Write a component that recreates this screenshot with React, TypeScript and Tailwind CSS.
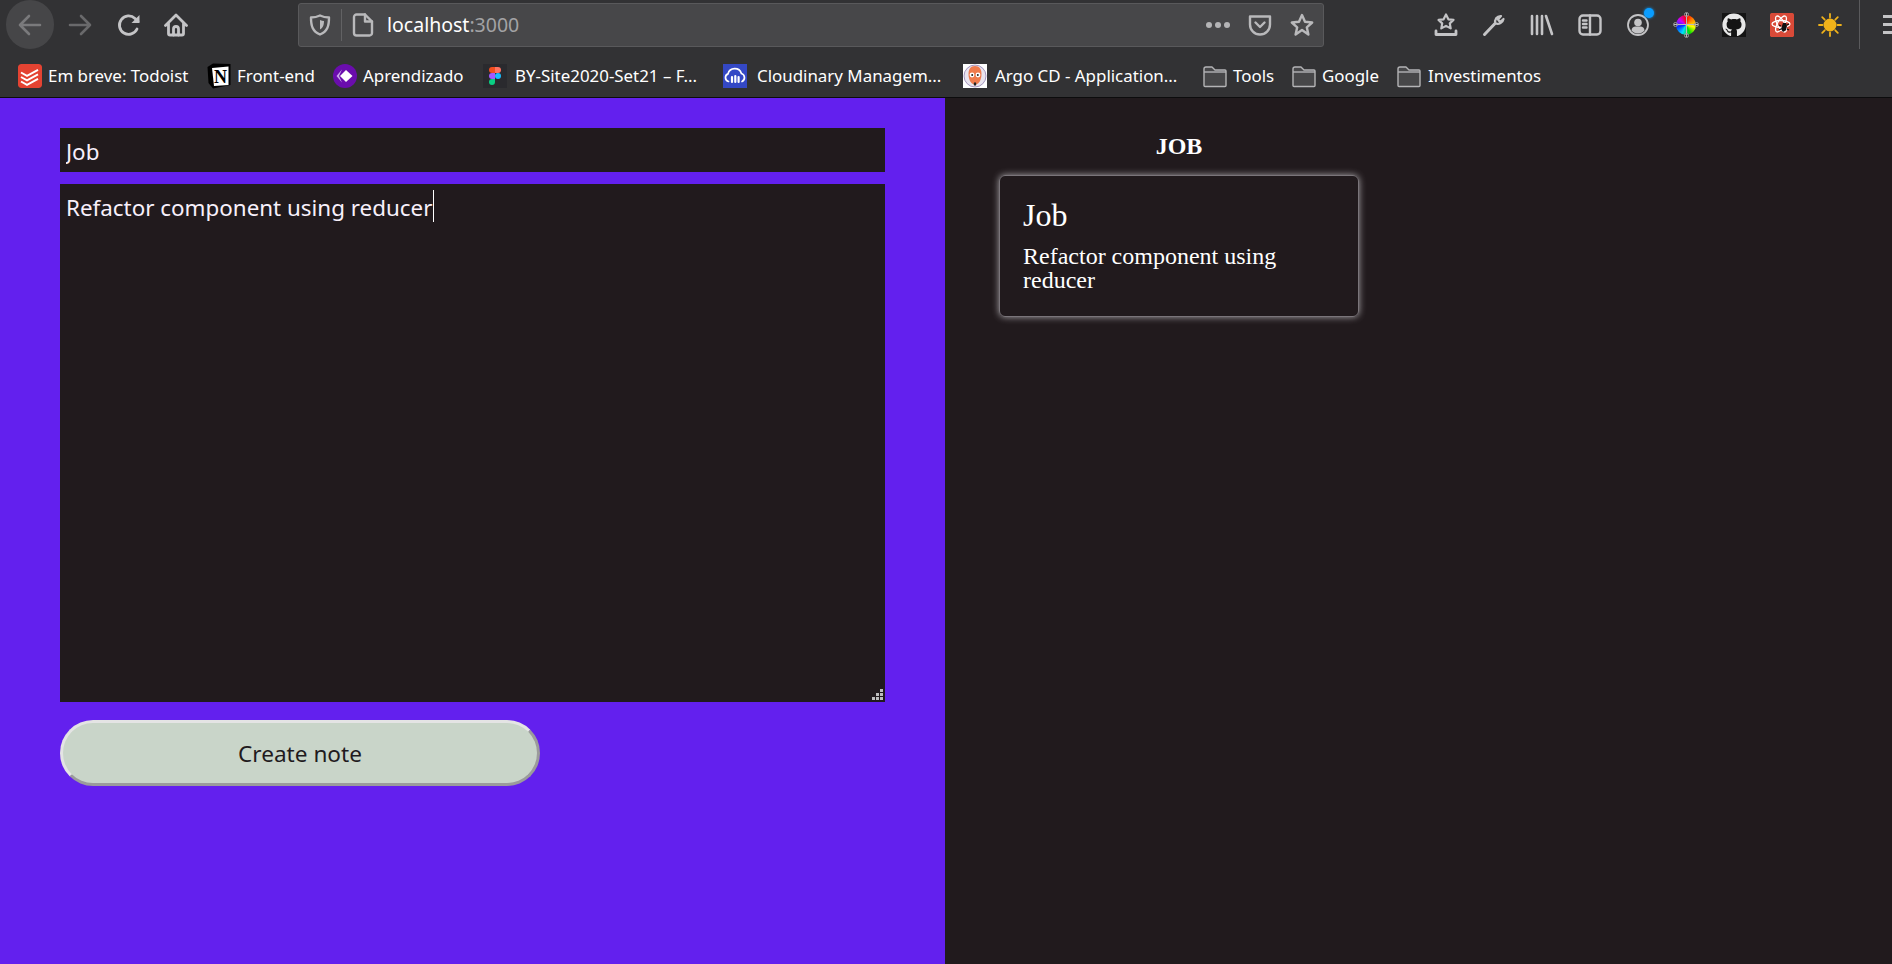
import { FaGithub } from "react-icons/fa";

const uiFont = "font-['Noto_Sans',sans-serif]";

function Glyph({ children, className = "text-[#bdbdbf]", w = 2.4 }: { children: React.ReactNode; className?: string; w?: number }) {
  return (
    <svg width="24" height="24" viewBox="0 0 24 24" fill="none" stroke="currentColor" strokeWidth={w} strokeLinecap="round" strokeLinejoin="round" className={className}>
      {children}
    </svg>
  );
}

function Btn({ children }: { children: React.ReactNode }) {
  return <div className="flex h-12 w-12 shrink-0 items-center justify-center">{children}</div>;
}

function Folder() {
  return (
    <svg width="24" height="24" viewBox="0 0 24 24" fill="#474749" stroke="#b4b4b6" strokeWidth="1.4" strokeLinejoin="round">
      <path d="M1 21.5V5a2 2 0 0 1 2-2h6l3 3h10a1 1 0 0 1 1 1v14.5a1 1 0 0 1-1 1H2a1 1 0 0 1-1-1z" />
      <path d="M1 8h22" />
    </svg>
  );
}

function Todoist() {
  return (
    <svg width="24" height="24" viewBox="0 0 24 24" className="rounded-[3px]">
      <rect width="24" height="24" rx="3" fill="#e44332" />
      <path d="M3 8.5l6 3.4 11-6M3 13l6 3.4 11-6M3 17.5l6 3.4 11-6" fill="none" stroke="#fff" strokeWidth="1.9" />
    </svg>
  );
}

function Notion() {
  return (
    <svg width="24" height="26" viewBox="0 0 24 26">
      <path d="M0.500 4L6 0.500 23.500 1v21L6 25.500 1.500 20z" fill="#000" />
      <path d="M5 5l16.500-1.500V22L7 23z" fill="#fff" />
      <text x="13.500" y="20" textAnchor="middle" fontFamily="'Liberation Serif', serif" fontSize="18" fontWeight="700" fill="#000">
        N
      </text>
    </svg>
  );
}

function Aprendizado() {
  return (
    <svg width="24" height="24" viewBox="0 0 24 24">
      <circle cx="12" cy="12" r="12" fill="#6a0dad" />
      <path d="M9 5.500L3.500 12 9 18.500 6 12z" fill="#c9a6ea" />
      <path d="M13 6l6.500 6-6.500 6-6-6z" fill="#fff" />
    </svg>
  );
}

function Figma() {
  return (
    <svg width="24" height="24" viewBox="0 0 24 24">
      <rect width="24" height="24" fill="#2a2a2e" />
      <path d="M12 3H9a3 3 0 0 0 0 6h3z" fill="#f24e1e" />
      <path d="M12 3h3a3 3 0 0 1 0 6h-3z" fill="#ff7262" />
      <path d="M12 9H9a3 3 0 0 0 0 6h3z" fill="#a259ff" />
      <circle cx="15" cy="12" r="3" fill="#1abcfe" />
      <path d="M9 15h3v3a3 3 0 1 1-3-3z" fill="#0acf83" />
    </svg>
  );
}

function Cloudinary() {
  return (
    <svg width="24" height="24" viewBox="0 0 24 24">
      <rect width="24" height="24" fill="#3448c5" />
      <path d="M5.500 17.500a4 4 0 0 1-.5-7.600 7 7 0 0 1 13.400-.4 4.300 4.300 0 0 1 .6 8" fill="none" stroke="#fff" strokeWidth="1.7" strokeLinecap="round" />
      <path d="M9 13v5M12.300 12v6M15.600 13v5" stroke="#fff" strokeWidth="2.200" strokeLinecap="round" />
    </svg>
  );
}

function Argo() {
  return (
    <svg width="24" height="24" viewBox="0 0 24 24">
      <rect width="24" height="24" fill="#fff" />
      <circle cx="12" cy="12" r="11" fill="#e9e4ef" stroke="#8f7fb0" strokeWidth="0.8" />
      <path d="M12 2c4.500 0 6.500 3.500 6.500 8 0 4-1.500 8-3.500 9.500-1.800 1.200-4.200 1.200-6 0C7 18 5.500 14 5.500 10c0-4.500 2-8 6.500-8z" fill="#ef7b4d" />
      <circle cx="9" cy="11" r="2.400" fill="#fff" />
      <circle cx="15" cy="11" r="2.400" fill="#fff" />
      <circle cx="9.200" cy="11" r="1" fill="#222" />
      <circle cx="14.800" cy="11" r="1" fill="#222" />
      <ellipse cx="12" cy="20" rx="1.300" ry="1.800" fill="#222" />
    </svg>
  );
}

const bookmarks = [
  { icon: <Todoist />, label: "Em breve: Todoist", left: 18, text: 48 },
  { icon: <Notion />, label: "Front-end", left: 207, text: 237 },
  { icon: <Aprendizado />, label: "Aprendizado", left: 333, text: 363 },
  { icon: <Figma />, label: "BY-Site2020-Set21 – F...", left: 483, text: 515 },
  { icon: <Cloudinary />, label: "Cloudinary Managem...", left: 723, text: 757 },
  { icon: <Argo />, label: "Argo CD - Application...", left: 963, text: 995 },
  { icon: <Folder />, label: "Tools", left: 1203, text: 1233 },
  { icon: <Folder />, label: "Google", left: 1292, text: 1322 },
  { icon: <Folder />, label: "Investimentos", left: 1397, text: 1428 },
];

function Toolbar() {
  return (
    <div className="flex h-[49px] items-center bg-[#323234] pl-[6px]">
      <div className="flex h-[49px] w-12 shrink-0 items-center justify-center rounded-full bg-[#464648]">
        <Glyph className="text-[#7a7a7c]" w={2.6}>
          <path d="M22 12H2M11 3l-9 9 9 9" />
        </Glyph>
      </div>
      <div className="ml-[2px]">
        <Btn>
          <Glyph className="text-[#69696b]" w={2.6}>
            <path d="M2 12h20M13 3l9 9-9 9" />
          </Glyph>
        </Btn>
      </div>
      <div className="ml-[1px]">
        <Btn>
          <Glyph className="text-[#c4c4c6]" w={2.8}>
            <path d="M20 16a9.200 9.200 0 1 1-2-10.500l3 2.800" />
            <path d="M22.500 2v8h-8" fill="currentColor" stroke="none" />
          </Glyph>
        </Btn>
      </div>
      <div className="-ml-[1px]">
        <Btn>
          <Glyph className="text-[#c4c4c6]" w={2.8}>
            <path d="M1.500 12.500L12 2l10.500 10.500M4.500 10v10.500a1.500 1.500 0 0 0 1.500 1.500h12a1.500 1.500 0 0 0 1.500-1.500V10" />
            <path d="M9.500 22v-6a2.500 2.500 0 0 1 5 0v6" />
          </Glyph>
        </Btn>
      </div>

      <div className={`ml-[98px] flex h-[44px] w-[1026px] shrink-0 items-center rounded-[3px] border border-[#59595b] bg-[#474749] ${uiFont}`}>
        <div className="flex w-[42px] justify-center">
          <Glyph className="text-[#b9b9bb]" w={2.4}>
            <path d="M12 2.500c3 1.500 6 2 9 2 0 8.500-1.500 14-9 17-7.500-3-9-8.500-9-17 3 0 6-.5 9-2z" />
            <path d="M12 7c1.500.6 2.700.9 4 1-.1 4-.8 6.500-4 8.500z" fill="currentColor" stroke="none" />
          </Glyph>
        </div>
        <div className="h-[32px] w-px bg-[#626264]" />
        <div className="ml-[9px] flex w-[24px] justify-center">
          <Glyph className="text-[#b9b9bb]" w={2.4}>
            <path d="M14 1.500H5.500a2.500 2.500 0 0 0-2.500 2.500v16a2.500 2.500 0 0 0 2.500 2.500h13a2.500 2.500 0 0 0 2.500-2.500V8.500z" />
            <path d="M14 1.500v7h7" />
          </Glyph>
        </div>
        <div className="ml-[12px] text-[19.500px] leading-none text-white">
          localhost<span className="text-[#a3a3a5]">:3000</span>
        </div>
        <div className="flex-1" />
        <div className="flex gap-[3px]">
          <div className="h-[6px] w-[6px] rounded-full bg-[#b4b4b6]" />
          <div className="h-[6px] w-[6px] rounded-full bg-[#b4b4b6]" />
          <div className="h-[6px] w-[6px] rounded-full bg-[#b4b4b6]" />
        </div>
        <div className="ml-[18px] flex w-[24px] justify-center">
          <Glyph className="text-[#b9b9bb]" w={2.4}>
            <path d="M2 3.500h20v8a10 10 0 0 1-20 0z" />
            <path d="M7.500 9.500L12 14l4.500-4.500" />
          </Glyph>
        </div>
        <div className="ml-[18px] mr-[9px] flex w-[24px] justify-center">
          <Glyph className="text-[#b9b9bb]" w={2.4}>
            <path d="M12 2l3 6.800 7.200.7-5.400 4.800 1.600 7.200L12 17l-6.400 4.500 1.600-7.200L1.800 9.500 9 8.800z" />
          </Glyph>
        </div>
      </div>

      <div className="ml-[98px] flex items-center">
        <Btn>
          <Glyph className="text-[#c4c4c6]" w={2.2}>
            <path d="M12 1.500l2.400 4.800 5.100.6-3.700 3.500.9 5-4.700-2.500-4.700 2.500.9-5-3.700-3.500 5.100-.6z" />
            <path d="M2 18v3.500h20V18" strokeWidth="2.800" />
          </Glyph>
        </Btn>
        <Btn>
          <Glyph className="text-[#c4c4c6]" w={3}>
            <path d="M2.500 21.500L13 10.500" />
            <path d="M13.500 10.500a5.500 5.500 0 0 1 5.500-7.500l-3 3.500 2 2.500 3.500-3a6 6 0 0 1-8 4.500z" strokeWidth="2.200" />
          </Glyph>
        </Btn>
        <Btn>
          <Glyph className="text-[#c4c4c6]" w={2.6}>
            <path d="M2 3v18M7 3v18M12 3v18M16 3l6 18" />
          </Glyph>
        </Btn>
        <Btn>
          <Glyph className="text-[#c4c4c6]" w={2.4}>
            <rect x="1.500" y="2.500" width="21" height="19" rx="3.500" />
            <path d="M12 2.500v19M5 7.500h3.500M5 11h3.500M5 14.500h3.500" />
          </Glyph>
        </Btn>
        <Btn>
          <div className="relative">
            <Glyph className="text-[#c4c4c6]" w={1.8}>
              <circle cx="12" cy="12" r="10" />
              <circle cx="12" cy="9.500" r="3.800" fill="currentColor" stroke="none" />
              <path d="M5.500 17.500c0-2.500 2-4 4-4h5c2 0 4 1.500 4 4-1.500 1.800-4 3-6.500 3s-5-1.200-6.500-3z" fill="currentColor" stroke="none" />
            </Glyph>
            <div className="absolute -right-[4px] -top-[5px] h-[10px] w-[10px] rounded-full bg-[#0a9dff] shadow-[0_0_3px_#0a9dff]" />
          </div>
        </Btn>
        <Btn>
          <div className="relative h-[24px] w-[24px]">
            <div className="absolute inset-[2px] rounded-full bg-[conic-gradient(#ff0000,#ff8800,#ffff00,#00dd00,#00ddff,#0033ff,#cc00ff,#ff0000)]" />
            <div className="absolute left-[11.500px] top-0 h-full w-px bg-[#bbb]" />
            <div className="absolute left-0 top-[11.500px] h-px w-full bg-[#bbb]" />
            <div className="absolute left-[9.500px] -top-[1px] h-[5px] w-[5px] rounded-full border border-[#999]" />
            <div className="absolute left-[9.500px] -bottom-[1px] h-[5px] w-[5px] rounded-full border border-[#999]" />
            <div className="absolute -left-[1px] top-[9.500px] h-[5px] w-[5px] rounded-full border border-[#999]" />
            <div className="absolute -right-[1px] top-[9.500px] h-[5px] w-[5px] rounded-full border border-[#999]" />
          </div>
        </Btn>
        <Btn>
          <div className="flex h-[24px] w-[24px] items-center justify-center bg-[#141414] text-[#e8e8e8]">
            <FaGithub size={24} />
          </div>
        </Btn>
        <Btn>
          <svg width="24" height="24" viewBox="0 0 24 24" className="rounded-[1px]">
            <rect width="24" height="24" rx="1.500" fill="#d94a38" />
            <g fill="none" stroke="#fff" strokeWidth="1.300">
              <ellipse cx="11" cy="11" rx="9" ry="3.500" />
              <ellipse cx="11" cy="11" rx="9" ry="3.500" transform="rotate(60 11 11)" />
              <ellipse cx="11" cy="11" rx="9" ry="3.500" transform="rotate(120 11 11)" />
            </g>
            <path d="M13 10h3l1 3-1 4-3 2-2-3z" fill="#111" />
            <path d="M11 13l-2-1M11 16l-2 1M17 12l2-1M17 16l2 1" stroke="#111" strokeWidth="1.300" />
          </svg>
        </Btn>
        <Btn>
          <svg width="24" height="24" viewBox="0 0 24 24">
            <circle cx="12" cy="12" r="6.500" fill="#f0b21a" />
            <path d="M12 1v3.500M12 19.500V23M1 12h3.500M19.500 12H23M4.200 4.200l2.500 2.500M17.300 17.300l2.500 2.500M4.200 19.800l2.500-2.500M17.300 6.700l2.500-2.500" stroke="#f0b21a" strokeWidth="1.800" strokeLinecap="round" />
          </svg>
        </Btn>
        <div className="ml-[5px] h-[49px] w-px bg-[#5a5a5c]" />
        <div className="ml-[23px] flex w-[9px] flex-col gap-[5px] overflow-hidden">
          <div className="h-[3px] w-[20px] bg-[#c4c4c6]" />
          <div className="h-[3px] w-[20px] bg-[#c4c4c6]" />
          <div className="h-[3px] w-[20px] bg-[#c4c4c6]" />
        </div>
      </div>
    </div>
  );
}

function BookmarksBar() {
  return (
    <div className={`flex h-[49px] items-center border-b border-[#0c0c0d] bg-[#323234] pl-[18px] pt-[6px] text-[16.900px] text-white ${uiFont}`}>
      {bookmarks.map((b, i) => {
        const next = bookmarks[i + 1];
        return (
          <div
            key={b.label}
            className="flex shrink-0 items-center overflow-visible whitespace-nowrap"
            style={{ width: next ? next.left - b.left : undefined }}
          >
            <div className="flex w-[24px] shrink-0 justify-center">{b.icon}</div>
            <span style={{ marginLeft: b.text - b.left - 24 }}>{b.label}</span>
          </div>
        );
      })}
    </div>
  );
}

export default function App() {
  return (
    <div className="flex h-screen w-full flex-col overflow-hidden bg-[#211a1d]">
      <Toolbar />
      <BookmarksBar />
      <div className="flex flex-1">
        <div className="w-[945px] shrink-0 bg-[#6320ee] pl-[60px] pt-[30px]">
          <input
            readOnly
            value="Job"
            className={`block h-[44px] w-[825px] bg-[#211a1d] px-[6px] pt-[2px] text-[22.400px] text-[#f8f0fb] outline-none ${uiFont}`}
          />
          <div className="relative mt-[12px] h-[518px] w-[825px]">
            <textarea
              readOnly
              value="Refactor component using reducer"
              className={`block h-full w-full resize-none bg-[#211a1d] px-[6px] py-[9px] text-[22.400px] leading-[30px] text-[#f8f0fb] outline-none ${uiFont}`}
            />
            <div className="absolute left-[373px] top-[6px] h-[32px] w-px bg-white" />
            <svg width="12" height="12" viewBox="0 0 12 12" className="absolute bottom-[1px] right-[1px]" fill="#bdbdbd">
              <rect x="8" y="0" width="3" height="3" />
              <rect x="4" y="4" width="3" height="3" />
              <rect x="8" y="4" width="3" height="3" />
              <rect x="0" y="8" width="3" height="3" />
              <rect x="4" y="8" width="3" height="3" />
              <rect x="8" y="8" width="3" height="3" />
            </svg>
          </div>
          <button
            className={`mt-[18px] block h-[66px] w-[480px] rounded-full border-[3px] border-t-[#e4e4e4] border-r-[#9b9b9b] border-b-[#9b9b9b] border-l-[#e4e4e4] bg-[#c9d5c9] pt-[2px] text-[22.600px] text-[#211a1d] ${uiFont}`}
          >
            Create note
          </button>
        </div>
        <div className="flex-1 pl-[54px] pt-[34px] font-['Liberation_Serif',serif] text-white">
          <div className="w-[360px]">
            <h2 className="text-center text-[24px] leading-[28px] font-bold">JOB</h2>
            <div className="mt-[15px] h-[142px] rounded-[6px] border border-[#7a757a] px-[23px] pt-[21px] shadow-[0_0_7px_#a7a3a7]">
              <h3 className="text-[32px] leading-[36px]">Job</h3>
              <p className="mt-[11px] text-[24px] leading-[24px]">Refactor component using reducer</p>
            </div>
          </div>
        </div>
      </div>
    </div>
  );
}
